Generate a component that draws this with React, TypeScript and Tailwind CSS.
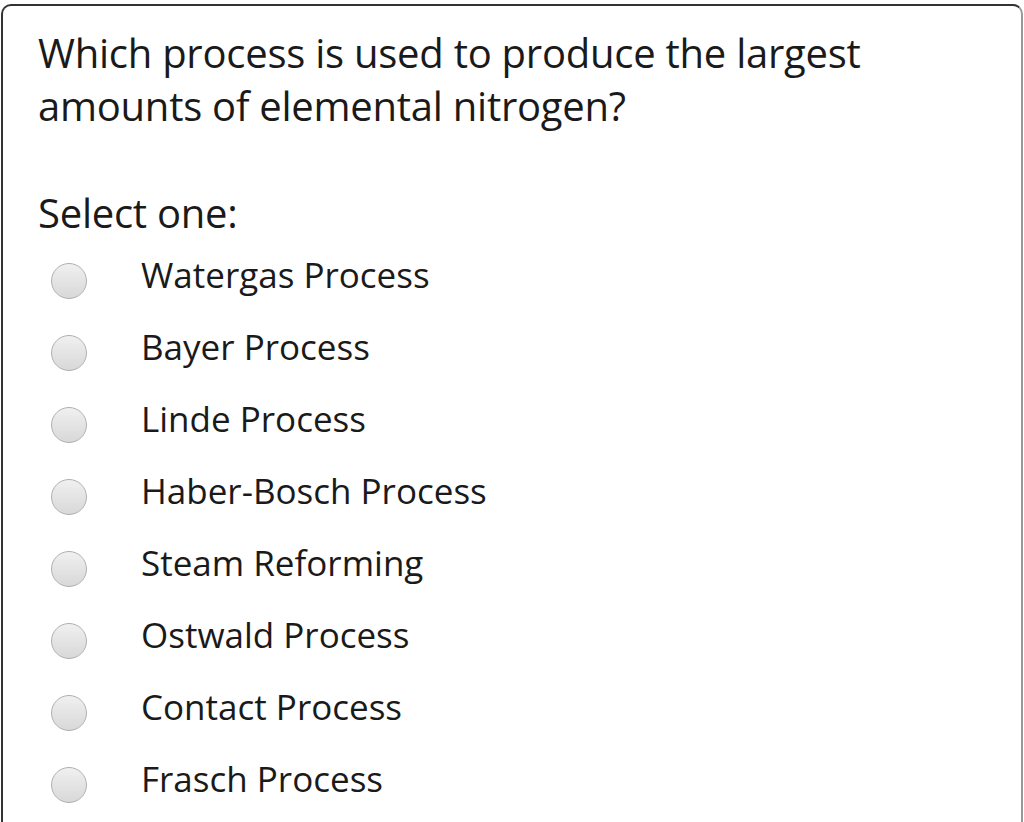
import React from "react";

const options = [
  "Watergas Process",
  "Bayer Process",
  "Linde Process",
  "Haber-Bosch Process",
  "Steam Reforming",
  "Ostwald Process",
  "Contact Process",
  "Frasch Process",
];

export default function App() {
  return (
    <div
      className="h-[822px] w-[1024px] overflow-hidden bg-white pt-[4px] pl-[1px]"
      style={{ fontFamily: '"Open Sans", sans-serif' }}
    >
      <div className="h-[900px] w-[1022px] rounded-[10px] border-[2px] border-[#333] border-r-[#999] pl-[35px] pr-[30px] pt-[20px] text-[#1a1a1a]">
        <p className="text-[40px] leading-[53px] tracking-[-0.25px]">
          Which process is used to produce the largest
          <br />
          amounts of elemental nitrogen?
        </p>

        <p className="mt-[54px] text-[40px] leading-[53px] tracking-[-0.25px]">Select one:</p>

        <div className="flex flex-col">
          {options.map((o) => (
            <label key={o} className="flex h-[72px] items-start">
              <span className="ml-[13px] mt-[24px] h-[36px] w-[36px] shrink-0 rounded-full border border-[#b0b0b0] bg-gradient-to-b from-[#f0f0f0] to-[#d8d8d8]" />
              <span className="ml-[54px] text-[35px] leading-[72px]">{o}</span>
            </label>
          ))}
        </div>
      </div>
    </div>
  );
}
